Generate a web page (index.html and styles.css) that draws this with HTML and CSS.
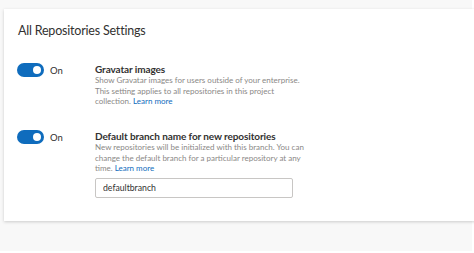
FILE: index.html
```html
<!DOCTYPE html>
<html lang="en">
<head>
    <meta charset="UTF-8">
    <title>All Repositories Settings</title>
    <link rel="stylesheet" href="styles.css">
</head>
<body>
    <div class="page">
        <div class="card">
            <h2>All Repositories Settings</h2>
            <div class="setting">
                <div class="toggle-cell">
                    <span class="toggle"><span class="knob"></span></span>
                    <span class="state">On</span>
                </div>
                <div class="info">
                    <div class="name">Gravatar images</div>
                    <p>Show Gravatar images for users outside of your enterprise. This setting applies to all repositories in this project collection. <a href="#">Learn more</a></p>
                </div>
            </div>
            <div class="setting">
                <div class="toggle-cell">
                    <span class="toggle"><span class="knob"></span></span>
                    <span class="state">On</span>
                </div>
                <div class="info">
                    <div class="name">Default branch name for new repositories</div>
                    <p>New repositories will be initialized with this branch. You can change the default branch for a particular repository at any time. <a href="#">Learn more</a></p>
                    <input type="text" class="branch-input" value="defaultbranch">
                </div>
            </div>
        </div>
    </div>
</body>
</html>
```

FILE: styles.css
```css
body {
    margin: 0;
    background-color: #fff;
    font-family: Lato, sans-serif;
    color: #323130;
    overflow: hidden;
}
.page {
    width: 472px;
    height: 251px;
    background-color: #f8f8f8;
    padding: 9px 0 0 4px;
    box-sizing: border-box;
}
.card {
    width: 490px;
    height: 212px;
    background-color: #fff;
    box-shadow: 0 1px 3px rgba(0, 0, 0, 0.18);
    padding: 13px 0 0 13px;
    box-sizing: border-box;
}
h2 {
    margin: 0 0 23px 1px;
    font-size: 12.5px;
    letter-spacing: -0.2px;
    font-weight: 400;
    line-height: 18px;
}
.setting {
    display: flex;
    margin-bottom: 23.5px;
}
.toggle-cell {
    width: 78px;
    display: flex;
    align-items: center;
    gap: 6px;
    height: 14px;
    flex-shrink: 0;
}
.toggle {
    width: 27px;
    height: 14px;
    border-radius: 7px;
    background-color: #0f6cbd;
    display: flex;
    align-items: center;
    justify-content: flex-end;
    padding-right: 3px;
    box-sizing: border-box;
}
.knob {
    width: 8px;
    height: 8px;
    border-radius: 50%;
    background-color: #fff;
}
.state {
    font-size: 9.5px;
    color: #323130;
}
.info {
    width: 212px;
}
.name {
    font-size: 10px;
    letter-spacing: -0.1px;
    font-weight: 700;
    line-height: 12px;
}
.info p {
    margin: 0;
    font-size: 8px;
    line-height: 10.5px;
    color: #8a8886;
}
.info a {
    color: #0f6cbd;
    text-decoration: none;
}
.branch-input {
    display: block;
    margin-top: 4px;
    width: 198px;
    height: 20px;
    box-sizing: border-box;
    border: 1px solid #c8c6c4;
    border-radius: 2px;
    padding: 0 7px;
    font-family: Lato, sans-serif;
    font-size: 8.7px;
    color: #323130;
}
```
